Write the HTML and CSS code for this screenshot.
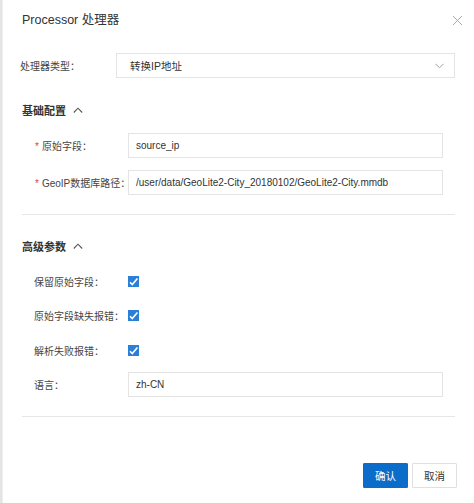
FILE: index.html
```html
<!DOCTYPE html>
<html lang="zh-CN">
<head>
<meta charset="utf-8">
<title>Processor 处理器</title>
<link rel="stylesheet" href="styles.css">
</head>
<body>
<div class="page">
  <div class="strip"></div>
  <div class="dialog">
    <header class="dlg-head">
      <h1 class="dlg-title">Processor 处理器</h1>
      <span class="close" aria-label="close">
        <svg width="11" height="11" viewBox="0 0 11 11"><path d="M1 1 L10 10 M10 1 L1 10" stroke="#a8a8a8" stroke-width="1" fill="none"/></svg>
      </span>
    </header>

    <div class="type-row">
      <label class="type-label">处理器类型：</label>
      <div class="select">
        <span>转换IP地址</span>
        <svg class="chev" width="9" height="6" viewBox="0 0 9 6"><path d="M0.5 0.8 L4.5 4.8 L8.5 0.8" stroke="#a0a0a0" stroke-width="1" fill="none"/></svg>
      </div>
    </div>

    <div class="section-title sec1">基础配置
      <svg class="caret" width="10" height="6" viewBox="0 0 10 6"><path d="M0.8 5.5 L5 1.2 L9.2 5.5" stroke="#555" stroke-width="1.1" fill="none"/></svg>
    </div>

    <div class="fields basic">
      <div class="field">
        <label class="flabel"><span class="req">*</span>原始字段：</label>
        <div class="input">source_ip</div>
      </div>
      <div class="field">
        <label class="flabel"><span class="req">*</span>GeoIP数据库路径：</label>
        <div class="input">/user/data/GeoLite2-City_20180102/GeoLite2-City.mmdb</div>
      </div>
    </div>

    <div class="divider d1"></div>

    <div class="section-title sec2">高级参数
      <svg class="caret" width="10" height="6" viewBox="0 0 10 6"><path d="M0.8 5.5 L5 1.2 L9.2 5.5" stroke="#555" stroke-width="1.1" fill="none"/></svg>
    </div>

    <div class="checks">
      <div class="crow">
        <label class="flabel">保留原始字段：</label>
        <span class="cbox"><svg width="11" height="11" viewBox="0 0 11 11"><rect width="11" height="11" fill="#2b7fd6"/><path d="M2 6.2 L4.3 8.6 L9.4 2.6" stroke="#fff" stroke-width="1.6" fill="none"/></svg></span>
      </div>
      <div class="crow">
        <label class="flabel">原始字段缺失报错：</label>
        <span class="cbox"><svg width="11" height="11" viewBox="0 0 11 11"><rect width="11" height="11" fill="#2b7fd6"/><path d="M2 6.2 L4.3 8.6 L9.4 2.6" stroke="#fff" stroke-width="1.6" fill="none"/></svg></span>
      </div>
      <div class="crow">
        <label class="flabel">解析失败报错：</label>
        <span class="cbox"><svg width="11" height="11" viewBox="0 0 11 11"><rect width="11" height="11" fill="#2b7fd6"/><path d="M2 6.2 L4.3 8.6 L9.4 2.6" stroke="#fff" stroke-width="1.6" fill="none"/></svg></span>
      </div>
    </div>

    <div class="field lang">
      <label class="flabel">语言：</label>
      <div class="input">zh-CN</div>
    </div>

    <div class="divider d2"></div>

    <footer class="dlg-foot">
      <button class="btn primary">确认</button>
      <button class="btn">取消</button>
    </footer>
  </div>
</div>
</body>
</html>
```

FILE: styles.css
```css
* { box-sizing: border-box; }

html, body {
  margin: 0;
  padding: 0;
  background: #fff;
}

body {
  font-family: "Liberation Sans", "Noto Sans CJK SC", sans-serif;
  color: #333;
  font-size: 10px;
}

.page {
  display: flex;
  width: 474px;
  height: 503px;
  overflow: hidden;
}

.strip {
  width: 3px;
  flex: 0 0 3px;
  background: #e4e4e4;
  border-right: 1px solid #efefef;
}

.dialog {
  flex: 1;
  display: flex;
  flex-direction: column;
  padding: 0 19px;
  background: #fff;
}

.dlg-head {
  height: 40px;
  display: flex;
  align-items: center;
  justify-content: space-between;
  margin-right: -8px;
}

.dlg-title {
  margin: 0;
  font-size: 12.5px;
  font-weight: normal;
  color: #333;
  line-height: 20px;
}

.close {
  display: flex;
  width: 11px;
  height: 11px;
  margin-top: 0;
}

.type-row {
  margin-top: 13px;
  display: flex;
  align-items: center;
  height: 25px;
}

.type-label {
  width: 94px;
  flex: 0 0 94px;
  color: #444;
  padding-left: 0;
  margin-left: -2px;
}

.select {
  flex: 1;
  height: 25px;
  margin-left: 2px;
  border: 1px solid #e4e4e4;
  display: flex;
  align-items: center;
  justify-content: space-between;
  padding: 0 10px 0 13px;
  color: #333;
  font-size: 10.5px;
}

.chev { display: block; }

.section-title {
  height: 20px;
  display: flex;
  align-items: center;
  font-size: 11px;
  font-weight: bold;
  color: #333;
}

.caret {
  margin-left: 7px;
  margin-top: -1px;
}

.sec1 { margin-top: 22px; }
.sec2 { margin-top: 21px; }

.fields {
  display: flex;
  flex-direction: column;
  gap: 12px;
}

.basic { margin-top: 13px; }

.field {
  display: flex;
  align-items: center;
  height: 25px;
  padding: 0 12px;
}

.flabel {
  width: 94px;
  flex: 0 0 94px;
  color: #444;
  white-space: nowrap;
}

.req {
  color: #e0453a;
  margin-left: 1px;
  margin-right: 3px;
}

.input {
  flex: 1;
  height: 25px;
  border: 1px solid #e4e4e4;
  display: flex;
  align-items: center;
  padding-left: 7px;
  color: #333;
  font-size: 10px;
  white-space: nowrap;
  overflow: hidden;
}

.divider {
  height: 1px;
  background: #e6e6e6;
}

.d1 { margin-top: 19px; }
.d2 { margin-top: 19px; }

.checks {
  margin-top: 15px;
  display: flex;
  flex-direction: column;
  gap: 14.5px;
  padding: 0 12px;
}

.crow {
  display: flex;
  align-items: center;
  height: 20px;
}

.cbox {
  display: flex;
  width: 11px;
  height: 11px;
}

.lang { margin-top: 12px; }

.dlg-foot {
  margin-top: 46px;
  display: flex;
  justify-content: flex-end;
  gap: 4px;
  margin-right: -2px;
}

.btn {
  height: 25px;
  width: 45px;
  border: 1px solid #e0e0e0;
  background: #fff;
  color: #333;
  font-family: "Liberation Sans", "Noto Sans CJK SC", sans-serif;
  font-size: 10.5px;
  padding: 0;
  border-radius: 1px;
}

.btn.primary {
  background: #0b6cc9;
  border-color: #0b6cc9;
  color: #fff;
}
```
